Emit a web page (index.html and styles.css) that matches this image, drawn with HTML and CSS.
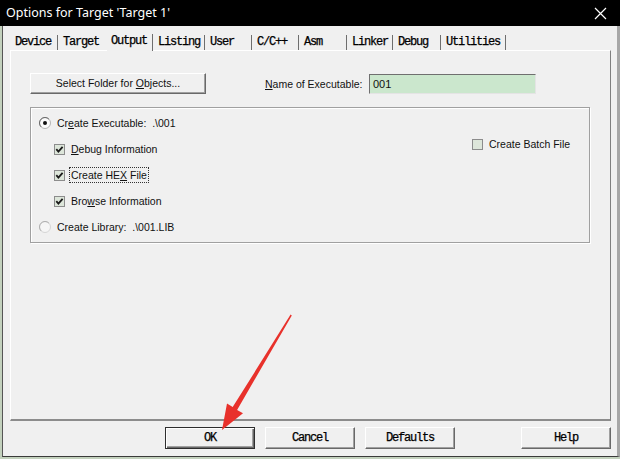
FILE: index.html
```html
<!DOCTYPE html>
<html>
<head>
<meta charset="utf-8">
<link rel="stylesheet" href="styles.css">
</head>
<body>
<div class="win">
  <div class="titlebar">
    <span class="title">Options for Target 'Target 1'</span>
    <svg class="close" viewBox="0 0 13 13"><path d="M1 1 L12 12 M12 1 L1 12" stroke="#fff" stroke-width="1.2" fill="none"/></svg>
  </div>
  <div class="frame">
    <div class="client">
      <div class="tabs">
        <div class="tab w48">Device</div>
        <div class="tab w49 presel">Target</div>
        <div class="tab w46 sel">Output</div>
        <div class="tab w52">Listing</div>
        <div class="tab w47">User</div>
        <div class="tab w47">C/C++</div>
        <div class="tab w48">Asm</div>
        <div class="tab w46">Linker</div>
        <div class="tab w48">Debug</div>
        <div class="tab w65">Utilities</div>
      </div>
      <div class="panel">
        <div class="row1">
          <div class="btn sbtn">Select Folder for <u>O</u>bjects...</div>
          <div class="namelbl"><u>N</u>ame of Executable:</div>
          <div class="input">001</div>
        </div>
        <div class="group">
          <div class="gleft">
            <div class="row rrow">
              <svg class="radio" viewBox="0 0 12 12"><circle cx="6" cy="6" r="5.5" fill="#fbfbfb" stroke="#b4b4b4"/><path d="M2.1 9.9 A5.5 5.5 0 0 1 9.9 2.1" fill="none" stroke="#6a6a6a"/><circle cx="6" cy="6" r="2" fill="#111"/></svg>
              <span>Cr<u>e</u>ate Executable:&nbsp; .\001</span>
            </div>
            <div class="row crow">
              <svg class="cb" viewBox="0 0 11 11"><rect x=".5" y=".5" width="10" height="10" fill="#dde6da" stroke="#8c8c8c"/><path d="M2.3 5.2 L4.4 7.6 L8.6 2.9" fill="none" stroke="#1a1a1a" stroke-width="1.8"/></svg>
              <span><u>D</u>ebug Information</span>
            </div>
            <div class="row crow">
              <svg class="cb" viewBox="0 0 11 11"><rect x=".5" y=".5" width="10" height="10" fill="#dde6da" stroke="#8c8c8c"/><path d="M2.3 5.2 L4.4 7.6 L8.6 2.9" fill="none" stroke="#1a1a1a" stroke-width="1.8"/></svg>
              <span class="focus">Create HE<u>X</u> File</span>
            </div>
            <div class="row crow">
              <svg class="cb" viewBox="0 0 11 11"><rect x=".5" y=".5" width="10" height="10" fill="#dde6da" stroke="#8c8c8c"/><path d="M2.3 5.2 L4.4 7.6 L8.6 2.9" fill="none" stroke="#1a1a1a" stroke-width="1.8"/></svg>
              <span>Bro<u>w</u>se Information</span>
            </div>
            <div class="row rrow">
              <svg class="radio" viewBox="0 0 12 12"><circle cx="6" cy="6" r="5.5" fill="#f6f6f6" stroke="#d6d6d6"/><path d="M2.1 9.9 A5.5 5.5 0 0 1 9.9 2.1" fill="none" stroke="#b0b0b0"/></svg>
              <span>Create Library:&nbsp; .\001.LIB</span>
            </div>
          </div>
          <div class="gright">
            <div class="row batch">
              <svg class="cb" viewBox="0 0 11 11"><rect x=".5" y=".5" width="10" height="10" fill="#dde6da" stroke="#8c8c8c"/></svg>
              <span>Create Batch File</span>
            </div>
          </div>
        </div>
      </div>
      <div class="buttons">
        <div class="btn bbtn default">OK</div>
        <div class="btn bbtn">Cancel</div>
        <div class="btn bbtn">Defaults</div>
        <div class="btn bbtn help">Help</div>
      </div>
    </div>
  </div>
  <svg class="arrow" viewBox="0 0 620 459"><polygon points="290.6,314.6 291.8,315.4 237.1,409.9 243,413.3 222,430 227,403.6 232.7,407.1" fill="#e8312b"/></svg>
</div>
</body>
</html>
```

FILE: styles.css
```css
* { box-sizing: border-box; }
html, body { margin: 0; padding: 0; }
body {
  width: 620px;
  height: 459px;
  overflow: hidden;
  background: #f0f0f0;
  font-family: "Liberation Sans", Arial, sans-serif;
  color: #111;
}
.win {
  position: relative;
  width: 620px;
  height: 459px;
  display: flex;
  flex-direction: column;
  background: #c3d1bd;
}
.titlebar {
  height: 26px;
  flex: none;
  background: #000;
  color: #fff;
  display: flex;
  align-items: center;
  justify-content: space-between;
  padding: 0 13px 0 6px;
}
.title {
  font-family: "Noto Sans", sans-serif;
  font-size: 12.5px;
  line-height: 26px;
}
.close { width: 13px; height: 13px; }
.frame {
  flex: 1;
  display: flex;
  padding: 0 0 2px 2px;
}
.client {
  flex: 1;
  display: flex;
  flex-direction: column;
  background: #f0f0f0;
  border-left: 1px solid #555;
  border-bottom: 1px solid #3a3a3a;
  border-right: 3px solid #a7a7a7;
  padding: 9px 6px 0 7px;
}
.tabs {
  display: flex;
  align-items: flex-end;
  height: 15px;
  flex: none;
}
.tab {
  height: 15px;
  padding: 1px 0 0 5px;
  line-height: 13px;
  border-right: 1px solid #6e6e6e;
  font-family: "Liberation Mono", "Courier New", monospace;
  font-weight: normal;
  font-size: 12px;
  letter-spacing: -1.2px;
  color: #000;
  -webkit-text-stroke: 0.25px #000;
  white-space: nowrap;
}
.tab.presel { border-right-color: transparent; }
.tab.sel {
  height: 17px;
  margin-bottom: -1px;
  position: relative;
  z-index: 1;
  background: #f0f0f0;
  padding-left: 4px;
}
.w46 { width: 46px; }
.w47 { width: 47px; }
.w48 { width: 48px; }
.w49 { width: 49px; }
.w52 { width: 52px; }
.w65 { width: 65px; }
.panel {
  height: 371px;
  flex: none;
  border-top: 1px solid #fff;
  border-left: 1px solid #fff;
  border-right: 1px solid #7f7f7f;
  border-bottom: 2px solid #8c8c8c;
  padding: 22px 0 0 19px;
  font-size: 10.5px;
}
.row1 {
  display: flex;
  align-items: center;
  height: 21px;
}
.btn {
  background: #f0f0f0;
  border: 1px solid;
  border-color: #fff #696969 #696969 #fff;
  box-shadow: inset -1px -1px 0 #a0a0a0;
  text-align: center;
  color: #111;
}
.sbtn {
  width: 176px;
  height: 21px;
  line-height: 19px;
  font-size: 10.5px;
}
.namelbl {
  width: 104px;
  margin-left: 59px;
}
.input {
  width: 167px;
  height: 20px;
  line-height: 18px;
  padding-left: 3px;
  background: #cbe7cd;
  border: 1px solid;
  border-color: #6f6f6f #e4e4e4 #e4e4e4 #6f6f6f;
  font-size: 11px;
}
.group {
  margin-top: 13px;
  width: 560px;
  height: 136px;
  border: 1px solid #a0a0a0;
  box-shadow: inset 1px 1px 0 #fff, 1px 1px 0 #fff;
  padding: 2px 0 0 8px;
  display: flex;
}
.gleft { flex: 1; }
.gright { width: 117px; margin-top: 21px; }
.row {
  display: flex;
  align-items: center;
  height: 26px;
  white-space: nowrap;
}
.rrow { gap: 6px; }
.crow { gap: 6px; padding-left: 15px; }
.batch { gap: 6px; }
.radio { width: 12px; height: 12px; flex: none; }
.cb { width: 11px; height: 11px; flex: none; }
.focus {
  border: 1px dotted #333;
  padding: 1px 1px 1px 1px;
  margin-left: -2px;
}
.buttons {
  display: flex;
  margin-top: 6px;
  padding-left: 155px;
  gap: 10px;
}
.bbtn {
  width: 90px;
  height: 22px;
  line-height: 20px;
  font-family: "Liberation Mono", "Courier New", monospace;
  font-weight: normal;
  font-size: 12px;
  letter-spacing: -1.2px;
  color: #000;
  -webkit-text-stroke: 0.25px #000;
}
.bbtn.default {
  border: 1px solid #2e2e2e;
  box-shadow: inset 1px 1px 0 #fff, inset -1px -1px 0 #696969, inset -2px -2px 0 #a0a0a0;
}
.bbtn.help { margin-left: 56px; }
.arrow {
  position: absolute;
  left: 0;
  top: 0;
  width: 620px;
  height: 459px;
  pointer-events: none;
}
```
